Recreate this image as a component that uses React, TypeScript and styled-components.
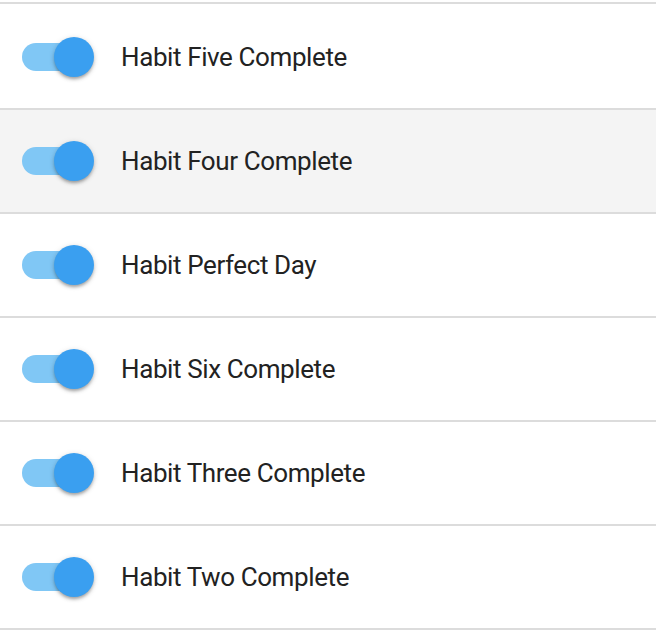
import React, { useState } from 'react'
import styled, { createGlobalStyle } from 'styled-components'

const GlobalStyle = createGlobalStyle`
  html, body {
    margin: 0;
    padding: 0;
    background: #ffffff;
    font-family: Roboto, 'Liberation Sans', sans-serif;
  }
`

const List = styled.ul`
  list-style: none;
  margin: 2px 0 0;
  padding: 2px 0 0;
  border-top: 2px solid #dcdcdc;
`

const Row = styled.li<{ $hover?: boolean }>`
  display: flex;
  align-items: center;
  height: 102px;
  padding-left: 22px;
  border-bottom: 2px solid #dcdcdc;
  background-color: ${(p) => (p.$hover ? '#f4f4f4' : '#ffffff')};
`

const Switch = styled.button<{ $on: boolean }>`
  position: relative;
  flex: 0 0 auto;
  width: 72px;
  height: 40px;
  padding: 0;
  border: 0;
  background: transparent;
  cursor: pointer;
  &::before {
    content: '';
    position: absolute;
    left: 0;
    top: 6px;
    width: 62px;
    height: 28px;
    border-radius: 14px;
    background-color: ${(p) => (p.$on ? '#80c7f5' : '#c8c8c8')};
  }
`

const Knob = styled.span<{ $on: boolean }>`
  position: absolute;
  top: 0;
  left: ${(p) => (p.$on ? '32px' : '0')};
  width: 40px;
  height: 40px;
  border-radius: 50%;
  background-color: ${(p) => (p.$on ? '#3a9ff0' : '#fafafa')};
  box-shadow: 0 3px 3px -1px rgba(0, 0, 0, 0.22), 0 2px 4px rgba(0, 0, 0, 0.14),
    0 1px 6px rgba(0, 0, 0, 0.1);
`

const Label = styled.span`
  margin-left: 27px;
  font-size: 26px;
  letter-spacing: -0.4px;
  color: #222222;
`

const habits = [
  'Habit Five Complete',
  'Habit Four Complete',
  'Habit Perfect Day',
  'Habit Six Complete',
  'Habit Three Complete',
  'Habit Two Complete',
]

const App: React.FC = () => {
  const [checked, setChecked] = useState<boolean[]>(habits.map(() => true))

  const toggle = (i: number) =>
    setChecked((prev) => prev.map((v, j) => (j === i ? !v : v)))

  return (
    <>
      <GlobalStyle />
      <List>
        {habits.map((name, i) => (
          <Row key={name} $hover={i === 1}>
            <Switch
              role="switch"
              aria-checked={checked[i]}
              $on={checked[i]}
              onClick={() => toggle(i)}
            >
              <Knob $on={checked[i]} />
            </Switch>
            <Label>{name}</Label>
          </Row>
        ))}
      </List>
    </>
  )
}

export default App
